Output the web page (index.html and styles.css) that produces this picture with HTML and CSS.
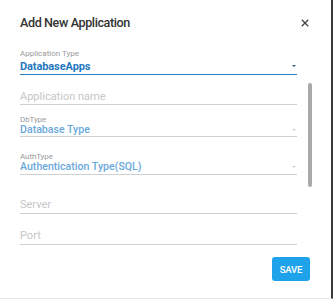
FILE: index.html
```html
<!DOCTYPE html>
<html>
<head>
<meta charset="utf-8">
<link rel="stylesheet" href="styles.css">
</head>
<body>
<div class="dialog">
  <div class="header">
    <div class="title">Add New Application</div>
    <div class="close">
      <svg width="8" height="8" viewBox="0 0 8 8"><path d="M0.8 0.8 L7.2 7.2 M7.2 0.8 L0.8 7.2" stroke="#444" stroke-width="1.3" fill="none"/></svg>
    </div>
  </div>
  <div class="body">
    <div class="field f1">
      <div class="label l1">Application Type</div>
      <div class="value v1 sel">DatabaseApps<span class="arrow dark"></span></div>
    </div>
    <div class="field f2">
      <div class="value ph">Application name</div>
    </div>
    <div class="field f3">
      <div class="label l2">DbType</div>
      <div class="value v2 dis">Database Type<span class="arrow light"></span></div>
    </div>
    <div class="field f4">
      <div class="label l2">AuthType</div>
      <div class="value v2 dis">Authentication Type(SQL)<span class="arrow light"></span></div>
    </div>
    <div class="field f5">
      <div class="value ph">Server</div>
    </div>
    <div class="field f6">
      <div class="value ph">Port</div>
    </div>
    <div class="scrollbar"></div>
  </div>
  <div class="footer">
    <button class="save">SAVE</button>
  </div>
</div>
</body>
</html>
```
FILE: styles.css
```css
html, body {
  margin: 0;
  padding: 0;
  background: #ffffff;
}
body {
  width: 334px;
  height: 300px;
  overflow: hidden;
  font-family: Roboto, "Liberation Sans", sans-serif;
}
.dialog {
  width: 331px;
  height: 298px;
  border-right: 2px solid #3a3a3a;
  border-bottom: 1px solid #e6e6e6;
  background: #fff;
  display: flex;
  flex-direction: column;
}
.header {
  display: flex;
  justify-content: space-between;
  align-items: flex-start;
  padding: 13px 0 0 20px;
  height: 20px;
}
.title {
  font-size: 12.6px;
  line-height: 20px;
  font-weight: 500;
  letter-spacing: -0.4px;
  color: #333;
}
.close {
  width: 8px;
  height: 8px;
  margin: 6px 22px 0 0;
  display: flex;
}
.body {
  position: relative;
  padding: 0 34px 0 20px;
}
.field {
  display: flex;
  flex-direction: column;
}
.f1 { margin-top: 15px; }
.f2 { margin-top: 15px; }
.f3 { margin-top: 11px; }
.f4 { margin-top: 16px; }
.f5 { margin-top: 23px; }
.f6 { margin-top: 15px; }
.label {
  color: #9a9a9a;
}
.l1 {
  font-size: 8px;
  line-height: 11px;
}
.l2 {
  font-size: 8px;
  line-height: 7px;
  letter-spacing: -0.1px;
}
.value {
  position: relative;
  border-bottom: 1px solid #cfcfcf;
}
.v1 {
  font-size: 11px;
  line-height: 15px;
  font-weight: 700;
  letter-spacing: -0.1px;
}
.v2 {
  font-size: 10.6px;
  line-height: 13px;
  font-weight: 500;
}
.sel {
  color: #1f77c0;
  border-bottom: 1px solid #2a7fc2;
}
.dis {
  color: #6aa8dc;
}
.f4 .v2 {
  line-height: 14px;
}
.ph {
  font-size: 11px;
  line-height: 14px;
  color: #c6c6c6;
  padding-bottom: 0;
}
.f5 .ph, .f6 .ph {
  padding-bottom: 1px;
}
.arrow {
  position: absolute;
  right: 1px;
  top: 6px;
  width: 0;
  height: 0;
  border-left: 2.5px solid transparent;
  border-right: 2.5px solid transparent;
}
.arrow.dark {
  border-top: 2.5px solid #3a5a7a;
}
.arrow.light {
  border-top: 2px solid #d0d0d0;
}
.scrollbar {
  position: absolute;
  left: 308px;
  top: 50px;
  width: 3.5px;
  height: 104px;
  border-radius: 2px;
  background: #a9a9a9;
}
.footer {
  display: flex;
  justify-content: flex-end;
  padding: 12px 21px 0 0;
}
.save {
  width: 38px;
  height: 24px;
  border: none;
  border-radius: 3px;
  background: #1ea3ea;
  color: #fff;
  font-family: Roboto, "Liberation Sans", sans-serif;
  font-size: 9.5px;
  font-weight: 500;
  padding: 0;
  letter-spacing: -0.2px;
}
```
